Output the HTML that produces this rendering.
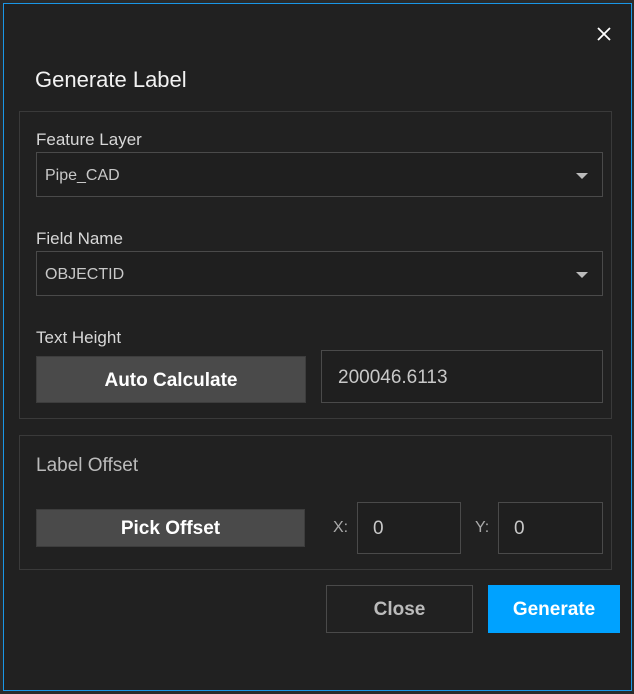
<!DOCTYPE html>
<html><head><style>
*{margin:0;padding:0;box-sizing:border-box}
body{width:634px;height:694px;background:#2a2a2a;position:relative;overflow:hidden;font-family:"Liberation Sans",sans-serif;color:#ddd}
.a{position:absolute}
.dlg{left:3px;top:3px;width:629px;height:688px;background:#212121;border:1.5px solid #1a96e6}
.grp{border:1px solid #3a3a3a}
.lbl{font-size:17px;color:#d8d8d8}
.box{border:1px solid #4a4a4a;background:#1f1f1f;font-size:16px;color:#c8c8c8;display:flex;align-items:center;padding-left:8px;padding-top:2px}
.btn{background:#4a4a4a;border:1px solid #3d3d3d;color:#fff;font-weight:bold;font-size:19px;display:flex;align-items:center;justify-content:center;padding-top:2px}
.arr{position:absolute;right:14px;top:20px;width:0;height:0;border-left:6px solid transparent;border-right:6px solid transparent;border-top:6px solid #bbb}
</style></head><body>
<div class="a dlg"></div>
<svg class="a" style="left:597px;top:27px" width="14" height="14" viewBox="0 0 14 14"><path d="M1 1L13 13M13 1L1 13" stroke="#fff" stroke-width="1.8"/></svg>
<div class="a" style="left:35px;top:67px;font-size:22px;color:#f2f2f2">Generate Label</div>
<div class="a grp" style="left:19px;top:111px;width:593px;height:308px"></div>
<div class="a lbl" style="left:36px;top:130px">Feature Layer</div>
<div class="a box" style="left:36px;top:152px;width:567px;height:45px">Pipe_CAD<div class="arr"></div></div>
<div class="a lbl" style="left:36px;top:229px">Field Name</div>
<div class="a box" style="left:36px;top:251px;width:567px;height:45px">OBJECTID<div class="arr"></div></div>
<div class="a lbl" style="left:36px;top:328px">Text Height</div>
<div class="a btn" style="left:36px;top:356px;width:270px;height:47px">Auto Calculate</div>
<div class="a box" style="left:321px;top:350px;width:282px;height:53px;font-size:19px;padding-left:16px">200046.6113</div>
<div class="a grp" style="left:19px;top:435px;width:593px;height:135px"></div>
<div class="a" style="left:36px;top:455px;font-size:19px;color:#bbb">Label Offset</div>
<div class="a btn" style="left:36px;top:509px;width:269px;height:38px">Pick Offset</div>
<div class="a" style="left:333px;top:519px;font-size:16px;color:#aaa">X:</div>
<div class="a box" style="left:357px;top:502px;width:104px;height:52px;font-size:19px;padding-left:15px">0</div>
<div class="a" style="left:475px;top:519px;font-size:16px;color:#aaa">Y:</div>
<div class="a box" style="left:498px;top:502px;width:105px;height:52px;font-size:19px;padding-left:15px">0</div>
<div class="a" style="left:326px;top:585px;width:147px;height:48px;border:1px solid #4a4a4a;color:#bbb;font-size:19px;font-weight:bold;display:flex;align-items:center;justify-content:center;padding-top:2px">Close</div>
<div class="a" style="left:488px;top:585px;width:132px;height:48px;background:#00a2ff;color:#fff;font-size:19px;font-weight:bold;display:flex;align-items:center;justify-content:center;padding-top:2px">Generate</div>
</body></html>
